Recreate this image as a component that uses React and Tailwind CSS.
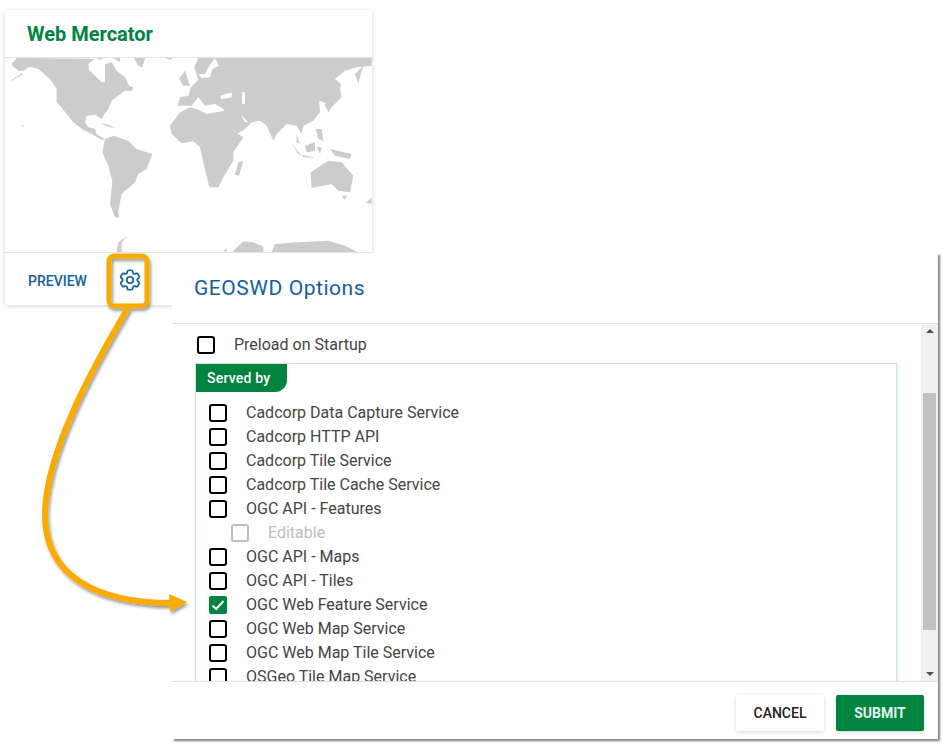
import React from "react";
import { HiOutlineCog6Tooth } from "react-icons/hi2";

const servicios = [
  { nombre: "Cadcorp Data Capture Service" },
  { nombre: "Cadcorp HTTP API" },
  { nombre: "Cadcorp Tile Service" },
  { nombre: "Cadcorp Tile Cache Service" },
  { nombre: "OGC API - Features" },
  { nombre: "Editable", sub: true },
  { nombre: "OGC API - Maps" },
  { nombre: "OGC API - Tiles" },
  { nombre: "OGC Web Feature Service", checked: true },
  { nombre: "OGC Web Map Service" },
  { nombre: "OGC Web Map Tile Service" },
  { nombre: "OSGeo Tile Map Service" },
];

// land west of x=190, 3x coords from (5,55)
const oeste = [
  "20,30 35,12 270,14 250,30 252,48 270,65 290,85 300,85 300,30 320,25 335,50 360,70 372,95 385,100 380,110 360,110 340,125 320,140 310,165 295,185 290,195 270,182 245,185 240,205 250,220 270,225 275,240 300,255 290,258 260,240 235,228 205,205 185,180 165,155 155,145 155,105 135,75 100,45 75,38 55,50 40,50 22,35",
  "17,80 50,58 52,62 20,80",
  "275,12 295,12 285,18",
  "325,12 345,12 345,25",
  "387,12 420,12 412,40 400,35",
  "480,12 503,12 495,18",
  "285,207 310,212 335,222 310,218",
  "300,255 325,245 370,260 395,285 442,300 425,345 400,360 390,385 350,420 340,470 343,492 330,490 315,450 322,380 310,335 292,295",
  "335,595 340,565 368,546 350,565 350,595",
  "51,213 56,213 56,218 51,218",
];

// land east of x=165, 3x coords from (165,55)
const este = [
  "15,215 45,175 75,160 95,165 125,180 180,170 190,195 210,235 235,250 205,295 205,320 175,370 160,400 133,400 115,325 105,280 85,262 50,268 20,240",
  "38,155 45,130 70,125 78,100 100,78 88,40 100,12 620,12 620,35 575,40 540,50 510,75 528,90 522,125 490,150 475,145 462,140 465,175 445,200 415,215 410,240 395,215 365,210 335,240 325,260 305,215 285,200 260,205 240,225 215,240 185,195 175,165 150,150 120,155 100,130 80,155 45,155",
  "42,75 60,50 75,95 55,95",
  "570,60 595,35 580,88",
  "478,150 500,140 525,105 530,130 500,160 490,175",
  "437,355 490,320 530,325 565,365 555,415 520,410 500,390 440,402",
  "530,425 548,425 538,437",
  "603,447 620,430 620,450",
  "220,325 235,322 222,365 210,362",
  "378,265 410,305 400,300",
  "410,302 450,312 415,310",
  "420,275 450,265 450,290 425,295",
  "455,280 470,280 465,300",
  "495,285 560,300 555,315 510,305",
  "452,225 470,225 475,260 460,255",
  "395,240 405,270 395,265",
  "200,595 235,562 265,565 295,578 295,595",
  "320,595 330,570 400,565 490,560 540,575 580,595",
  "175,590 185,585 185,595",
];

// inland seas
const mares = [
  "230,115 240,115 240,150 232,150",
  "165,125 200,115 200,130 170,135",
  "150,12 162,35 142,45 135,70 110,72 100,60 120,60 130,40",
  "225,180 250,205 240,205",
];

const Casilla = ({ checked, disabled }) => {
  if (checked) {
    return (
      <span className="w-[18px] h-[18px] shrink-0 rounded-[2px] bg-[#00843f] flex items-center justify-center">
        <svg width="14" height="14" viewBox="0 0 14 14" fill="none">
          <path d="M1.5 7.5 L5.2 11 L12.5 3" stroke="#fff" strokeWidth="2" />
        </svg>
      </span>
    );
  }
  return (
    <span
      className={
        disabled
          ? "w-[18px] h-[18px] shrink-0 rounded-[3px] border-2 border-[#bdbdbd] bg-white"
          : "w-[18px] h-[18px] shrink-0 rounded-[3px] border-2 border-black bg-white"
      }
    />
  );
};

const App = () => {
  return (
    <div className="relative w-[943px] h-[744px] overflow-hidden bg-white font-['Roboto',sans-serif]">
      {/* tarjeta */}
      <div className="ml-[5px] mt-[10px] inline-block w-[367px] h-[295px] bg-white rounded-[3px] shadow-[0_1px_4px_rgba(30,60,90,0.22)] align-top">
        <div className="h-[48px] flex items-center pl-[22px] pt-[1px] text-[20px] font-bold text-[#00843f] border-b border-[#e4e4e4]">
          Web Mercator
        </div>
        <svg className="block w-[367px] h-[194px]" viewBox="5 59 367 194">
          <g transform="translate(5 55) scale(0.3333)" fill="#cccccc">
            {oeste.map((puntos) => (
              <polygon key={puntos} points={puntos} />
            ))}
          </g>
          <g transform="translate(165 55) scale(0.3333)" fill="#cccccc">
            {este.map((puntos) => (
              <polygon key={puntos} points={puntos} />
            ))}
            {mares.map((puntos) => (
              <polygon key={puntos} points={puntos} fill="#ffffff" />
            ))}
          </g>
        </svg>
        <div className="h-[52px] flex items-center border-t border-[#e2e6ea] pl-[23px]">
          <span className="mt-[5px] text-[14px] font-medium text-[#14609e]">PREVIEW</span>
          <HiOutlineCog6Tooth className="ml-[30px] mt-[3px] text-[#14609e]" size={26} strokeWidth={1.6} />
        </div>
      </div>

      {/* dialogo */}
      <div className="absolute left-[172px] top-[253px] w-[766px] h-[486px] bg-white flex flex-col shadow-[2px_2px_2px_rgba(0,0,0,0.5)]">
        <div className="h-[71px] shrink-0 flex items-center pl-[22px] pt-[2px] border-b border-[#dfdfdf] text-[21px] text-[#14609e] tracking-[0.55px]">
          GEOSWD Options
        </div>
        <div className="flex-1 flex min-h-0">
          <div className="flex-1 overflow-hidden pl-[23px] pr-[24px]">
            <div className="h-[39px] flex items-center pl-[2px] pt-[2px] text-[16px] text-[#444444]">
              <Casilla />
              <span className="ml-[19px]">Preload on Startup</span>
            </div>
            <div className="border border-[#cfe6df] shadow-[1px_1px_3px_rgba(120,170,160,0.25)] h-[400px]">
              <div className="w-[91px] h-[28px] bg-[#00843f] rounded-br-[12px] text-white text-[14px] font-medium flex items-center pl-[11px] tracking-[0.2px]">
                Served by
              </div>
              <div className="pt-[9px] pl-[13px] flex flex-col">
                {servicios.map((s) => (
                  <div
                    key={s.nombre}
                    className={
                      s.sub
                        ? "h-[24px] flex items-center gap-[19px] pl-[22px] text-[16px] text-[#bdbdbd]"
                        : "h-[24px] flex items-center gap-[19px] text-[16px] text-[#444444]"
                    }
                  >
                    <Casilla checked={s.checked} disabled={s.sub} />
                    <span>{s.nombre}</span>
                  </div>
                ))}
              </div>
            </div>
          </div>
          {/* barra de scroll */}
          <div className="w-[17px] shrink-0 bg-[#f0f0f0] flex flex-col items-center justify-between py-[5px] relative">
            <span className="w-0 h-0 border-l-[4px] border-r-[4px] border-b-[4px] border-l-transparent border-r-transparent border-b-[#505050]" />
            <div className="absolute left-[2px] top-[69px] w-[13px] h-[237px] bg-[#c1c1c1]" />
            <span className="w-0 h-0 border-l-[4px] border-r-[4px] border-t-[4px] border-l-transparent border-r-transparent border-t-[#505050]" />
          </div>
        </div>
        <div className="h-[58px] shrink-0 border-t border-[#dfdfdf] flex items-center justify-end gap-[12px] pr-[14px] pt-[5px]">
          <button className="w-[88px] h-[36px] bg-white rounded-[2px] shadow-[0_1px_4px_rgba(30,60,90,0.2)] text-[14px] font-medium text-[#222222]">
            CANCEL
          </button>
          <button className="w-[88px] h-[36px] bg-[#00843f] rounded-[2px] shadow-[0_1px_3px_rgba(30,60,90,0.25)] text-[14px] font-bold text-white/90">
            SUBMIT
          </button>
        </div>
      </div>

      {/* anotacion */}
      <svg className="absolute left-0 top-0 pointer-events-none" width="943" height="744" fill="none">
        <defs>
          <filter id="sombra" x="-20%" y="-20%" width="140%" height="140%">
            <feDropShadow dx="1.5" dy="2.5" stdDeviation="1.5" floodColor="#000" floodOpacity="0.4" />
          </filter>
        </defs>
        <g filter="url(#sombra)" stroke="#f9ab00">
          <rect x="109" y="256" width="38" height="50" rx="5" strokeWidth="5" />
          <path d="M128 308 C 100 355 45 450 45 515 C 45 575 95 603 172 603" strokeWidth="6" />
          <path d="M169 594 L187 602 L170 612 Z" fill="#f9ab00" stroke="none" />
        </g>
      </svg>
    </div>
  );
};

export default App;
